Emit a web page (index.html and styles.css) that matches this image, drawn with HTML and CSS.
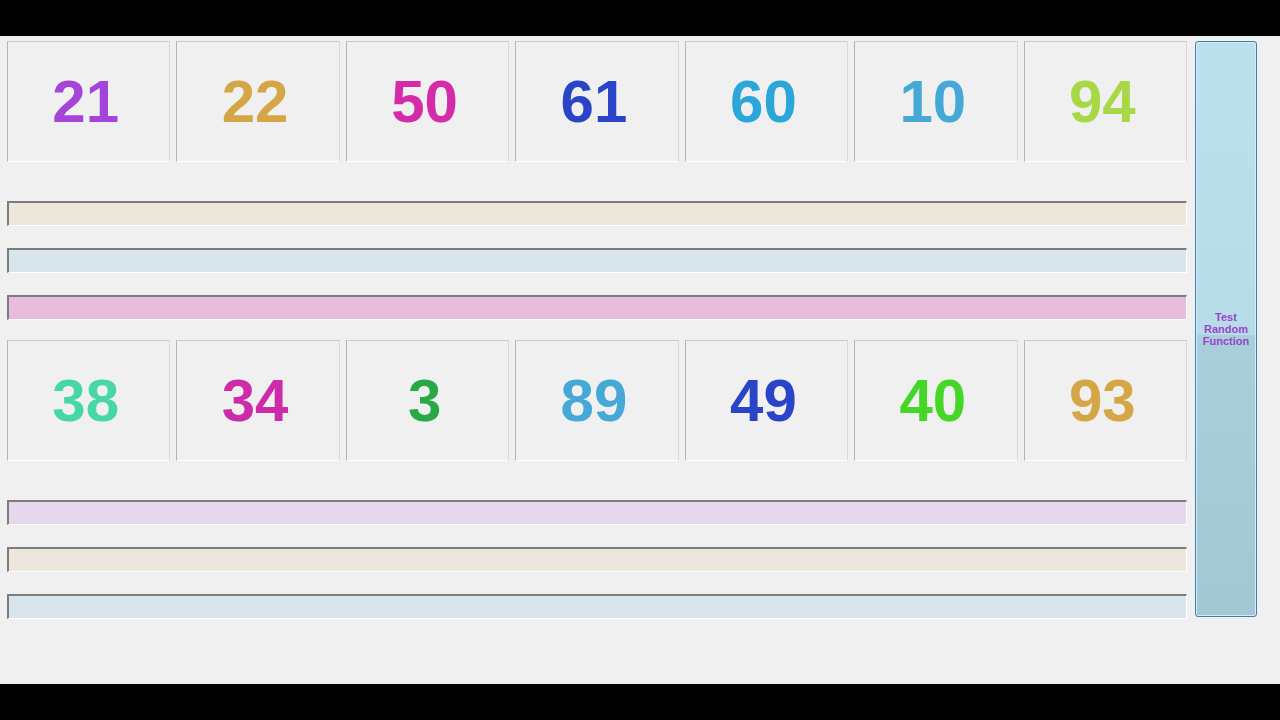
FILE: index.html
```html
<!DOCTYPE html>
<html>
<head>
<meta charset="utf-8">
<link rel="stylesheet" href="styles.css">
</head>
<body>
<div class="topbar"></div>
<main class="app">
  <section class="left">
    <div class="boxes">
      <div class="box c-purple">21</div>
      <div class="box c-gold">22</div>
      <div class="box c-magenta">50</div>
      <div class="box c-blue">61</div>
      <div class="box c-cyan">60</div>
      <div class="box c-sky">10</div>
      <div class="box c-lime">94</div>
    </div>
    <div class="bars">
      <div class="bar b-beige"></div>
      <div class="bar b-blue"></div>
      <div class="bar b-pink"></div>
    </div>
    <div class="boxes boxes2">
      <div class="box c-teal">38</div>
      <div class="box c-magenta2">34</div>
      <div class="box c-green">3</div>
      <div class="box c-sky">89</div>
      <div class="box c-blue">49</div>
      <div class="box c-lgreen">40</div>
      <div class="box c-gold">93</div>
    </div>
    <div class="bars">
      <div class="bar b-lilac"></div>
      <div class="bar b-beige"></div>
      <div class="bar b-blue"></div>
    </div>
  </section>
  <button class="testbtn"><span>Test<br>Random<br>Function</span></button>
</main>
<div class="bottombar"></div>
</body>
</html>
```

FILE: styles.css
```css
html, body {
  margin: 0;
  padding: 0;
  width: 1280px;
  height: 720px;
  overflow: hidden;
  background: #f0f0f0;
  font-family: "Liberation Sans", Arial, sans-serif;
}

.topbar {
  height: 36px;
  background: #000;
}

.bottombar {
  height: 36px;
  background: #000;
}

.app {
  height: 648px;
  box-sizing: border-box;
  padding: 5px 23px 0 7px;
  display: flex;
  gap: 8px;
  align-items: flex-start;
}

.left {
  width: 1180px;
  display: flex;
  flex-direction: column;
}

.boxes {
  display: grid;
  grid-template-columns: repeat(7, 1fr);
  gap: 6px;
  height: 121px;
}

.boxes2 {
  margin-top: 20px;
}

.box {
  box-sizing: border-box;
  border-top: 1px solid #c9c9c9;
  border-left: 1px solid #b4b4b4;
  border-right: 1px solid #d8d8d8;
  border-bottom: 1px solid #ffffff;
  display: flex;
  align-items: center;
  justify-content: center;
  font-size: 60px;
  font-weight: bold;
  padding: 0 6px 1px 0;
}

.bars {
  margin-top: 39px;
  display: flex;
  flex-direction: column;
  gap: 22px;
}

.bar {
  height: 25px;
  box-sizing: border-box;
  border-top: 2px solid #7c7c7c;
  border-left: 2px solid #7c7c7c;
  border-right: 1px solid #ffffff;
  border-bottom: 1px solid #ffffff;
}

.b-beige { background: #ede6da; }
.b-blue { background: #d9e5ec; }
.b-pink { background: #e8bcdd; }
.b-lilac { background: #e6d8ec; }

.c-purple { color: #a444d8; }
.c-gold { color: #d4a646; }
.c-magenta { color: #d42ca8; }
.c-magenta2 { color: #cc2caa; }
.c-blue { color: #2a44c8; }
.c-cyan { color: #2aa6d8; }
.c-sky { color: #46a8d6; }
.c-lime { color: #a8d848; }
.c-teal { color: #46d6a8; }
.c-green { color: #28a846; }
.c-lgreen { color: #46d628; }

.testbtn {
  width: 62px;
  height: 576px;
  box-sizing: border-box;
  border: 1px solid #3c7fb1;
  border-radius: 3px;
  box-shadow: inset 0 0 0 1px #d4eef7;
  background: linear-gradient(to bottom, #bde1ec 0%, #b6dce8 51%, #a9cfdb 51%, #a2c8d4 100%);
  padding: 0;
  margin: 0;
  display: flex;
  align-items: center;
  justify-content: center;
  font-family: "Liberation Sans", Arial, sans-serif;
  font-size: 11px;
  font-weight: bold;
  line-height: 12px;
  color: #9a44cc;
  text-align: center;
}
```
